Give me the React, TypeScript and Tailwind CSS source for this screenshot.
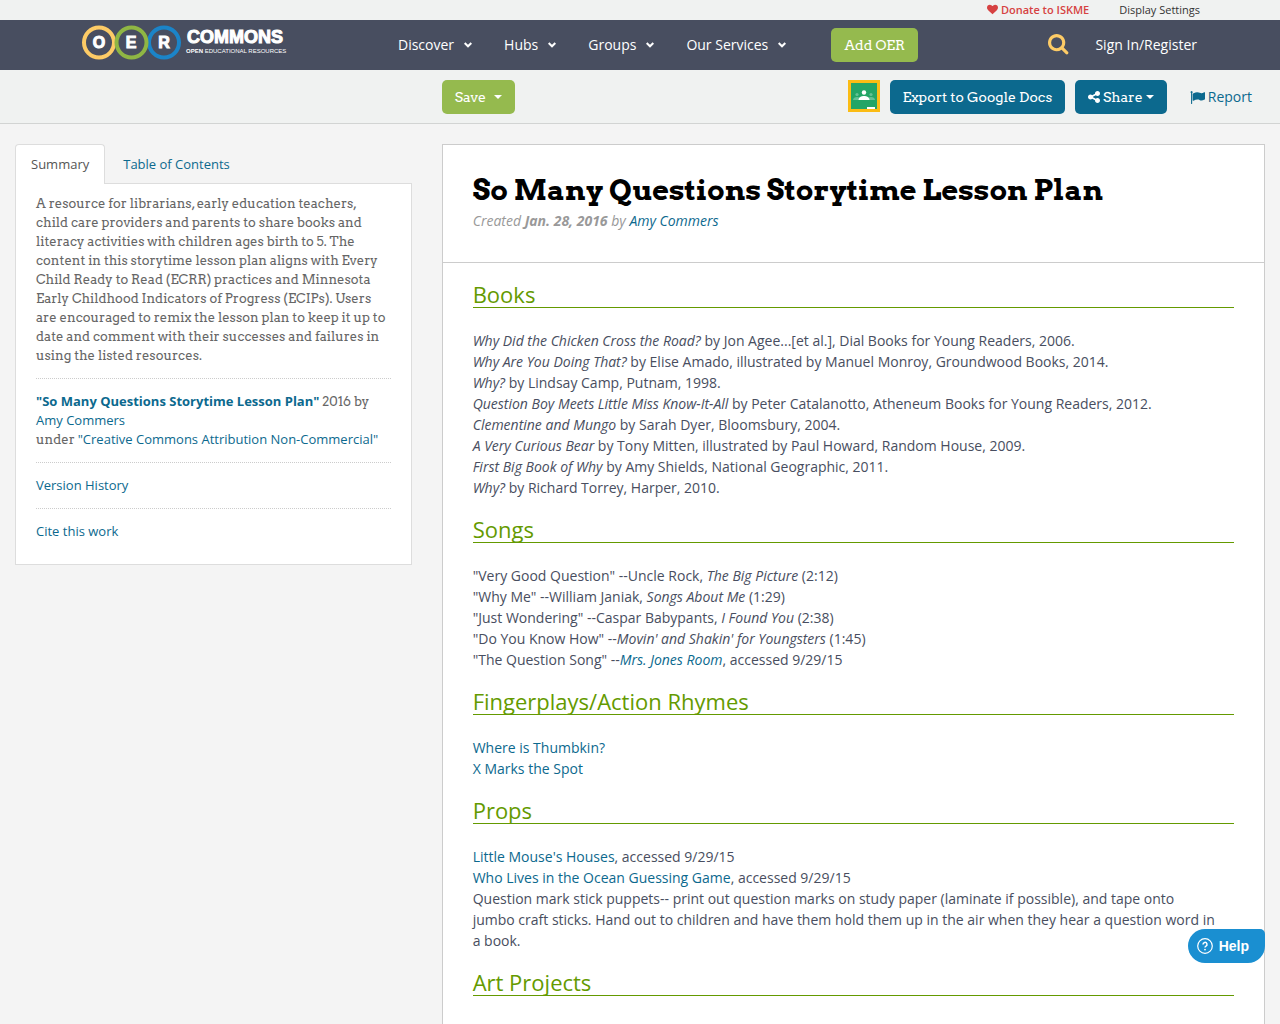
import type { ReactNode } from 'react'

const icons = {
    heart: 'M896 1664q-26 0-44-18l-624-602q-10-8-27.5-26t-55.5-65.5-68-97.5-53.5-121-23.5-138q0-220 127-344t351-124q62 0 126.5 21.5t120 58 95.5 68.5 76 68q36-36 76-68t95.5-68.5 120-58 126.5-21.5q224 0 351 124t127 344q0 221-229 450l-623 600q-18 18-44 18z',
    search: 'M1152 704q0-185-131.5-316.5t-316.5-131.5-316.5 131.5-131.5 316.5 131.5 316.5 316.5 131.5 316.5-131.5 131.5-316.5zm512 832q0 52-38 90t-90 38q-54 0-90-38l-343-342q-179 124-399 124-143 0-273.5-55.5t-225-150-150-225-55.5-273.5 55.5-273.5 150-225 225-150 273.5-55.5 273.5 55.5 225 150 150 225 55.5 273.5q0 220-124 399l343 343q37 37 37 90z',
    share: 'M1344 1024q133 0 226.5 93.5t93.5 226.5-93.5 226.5-226.5 93.5-226.5-93.5-93.5-226.5q0-12 2-34l-360-180q-92 86-218 86-133 0-226.5-93.5t-93.5-226.5 93.5-226.5 226.5-93.5q126 0 218 86l360-180q-2-22-2-34 0-133 93.5-226.5t226.5-93.5 226.5 93.5 93.5 226.5-93.5 226.5-226.5 93.5q-126 0-218-86l-360 180q2 22 2 34t-2 34l360 180q92-86 218-86z',
    flag: 'M320 256q0 72-64 110v1266q0 13-9.5 22.5t-22.5 9.5h-64q-13 0-22.5-9.5t-9.5-22.5v-1266q-64-38-64-110 0-53 37.5-90.5t90.5-37.5 90.5 37.5 37.5 90.5zm1472 64v763q0 25-12.5 38.5t-39.5 27.5q-215 116-369 116-61 0-123.5-22t-108.5-48-115.5-48-142.5-22q-192 0-464 146-17 9-33 9-26 0-45-19t-19-45v-742q0-32 31-55 21-14 79-43 236-120 421-120 107 0 200 29t219 88q38 19 88 19 54 0 117.5-21t110-47 88-47 54.5-21q26 0 45 19t19 45z',
}

type IconProps = {
    name: keyof typeof icons
    className: string
    viewBox?: string
}

function Icon({ name, className, viewBox = '0 0 1792 1792' }: IconProps) {
    return (
        <svg viewBox={viewBox} fill="currentColor" className={className} aria-hidden="true">
            <path d={icons[name]} />
        </svg>
    )
}

function Caret() {
    return (
        <svg viewBox="0 0 8 4" width="8" height="4" fill="currentColor" aria-hidden="true">
            <path d="M0 0h8L4 4z" />
        </svg>
    )
}

function Logo() {
    return (
        <svg width="208" height="36" viewBox="0 0 208 36" role="img" aria-label="OER Commons" className="font-['Liberation_Sans',sans-serif] font-bold">
            <circle cx="17" cy="17.5" r="15" fill="none" stroke="#fdcb66" strokeWidth="4" />
            <circle cx="82" cy="17.5" r="15" fill="none" stroke="#1b84c8" strokeWidth="4" />
            <circle cx="49.5" cy="17.5" r="15" fill="none" stroke="#8fb644" strokeWidth="4" />
            <g fill="#fff" stroke="#fff" strokeWidth="1">
                <text x="17" y="23" fontSize="16" textAnchor="middle">O</text>
                <text x="49" y="23" fontSize="16" textAnchor="middle">E</text>
                <text x="82" y="23" fontSize="16" textAnchor="middle">R</text>
                <text x="105" y="18" fontSize="18">COMMONS</text>
            </g>
            <text x="104" y="28" fontSize="6" fill="#fff">
                OPEN <tspan fontWeight="400">EDUCATIONAL RESOURCES</tspan>
            </text>
        </svg>
    )
}

function NavItem({ label }: { label: string }) {
    return (
        <button className="flex items-center gap-[10px] text-sm text-white">
            {label}
            <svg viewBox="0 0 8 6" width="8" height="6" fill="none" stroke="currentColor" strokeWidth="2" aria-hidden="true">
                <path d="M0.7 1l3.3 3.3L7.3 1" />
            </svg>
        </button>
    )
}

function Link({ children, className = '' }: { children: ReactNode, className?: string }) {
    return <a href="#" className={`text-[#0c698e] ${className}`}>{children}</a>
}

function Section({ title, children }: { title: string, children?: ReactNode }) {
    return (
        <section className="pt-[19px]">
            <h2 className="mb-[22px] border-b border-[#649a00] text-[22px] leading-[25px] text-[#649a00]">{title}</h2>
            {children}
        </section>
    )
}

function ClassroomIcon() {
    return (
        <svg width="32" height="32" viewBox="0 0 32 32" aria-hidden="true">
            <path fill="#fbbc14" d="M0 0h32v32H0z" />
            <path fill="#23a566" d="M3 3h26v26H3z" />
            <g fill="#64c194">
                <circle cx="9" cy="14.5" r="1.6" />
                <circle cx="23" cy="14.5" r="1.6" />
                <path d="M5 20c0-4 8-4 8 0zM19 20c0-4 8-4 8 0z" />
            </g>
            <circle cx="16" cy="12.5" r="2.2" fill="#fff" />
            <path fill="#fff" d="M10.5 20c0-5.5 11-5.5 11 0z" />
            <path fill="#fff" d="M19 27h8v2h-8z" />
        </svg>
    )
}

export default function App() {
    return (
        <div className="min-h-screen bg-[#f4f4f4] font-['Open_Sans',sans-serif] text-sm text-[#484e60]">
            <div className="bg-[#f0f2f1]">
                <div className="mx-auto flex h-5 max-w-[1170px] items-center justify-end gap-[30px] pr-[25px] text-[11px]">
                    <a href="#" className="flex items-center gap-[3px] font-semibold text-[#d64242]">
                        <Icon name="heart" className="size-[11px]" />
                        Donate to ISKME
                    </a>
                    <button className="text-[#333]">Display Settings</button>
                </div>
            </div>

            <header className="bg-[#484e60]">
                <div className="mx-auto flex h-[50px] max-w-[1170px] items-center pr-7 pl-[27px]">
                    <a href="#" className="mb-[5px]"><Logo /></a>
                    <nav className="ml-[108px] flex items-center gap-8">
                        <NavItem label="Discover" />
                        <NavItem label="Hubs" />
                        <NavItem label="Groups" />
                        <NavItem label="Our Services" />
                    </nav>
                    <button className="ml-[45px] h-[34px] w-[87px] rounded-[5px] bg-[#95ba4e] font-['Arvo',serif] text-sm text-white">Add OER</button>
                    <button aria-label="Search" className="ml-auto text-[#fdcb66]">
                        <Icon name="search" className="size-[22px]" />
                    </button>
                    <a href="#" className="ml-[25px] text-white">Sign In/Register</a>
                </div>
            </header>

            <div className="grid grid-cols-3 border-b border-[#d2d4d3] bg-[#f0f2f1] pt-[10px] pb-[9px] font-['Arvo',serif] text-sm">
                <div className="col-span-2 col-start-2 flex items-center px-[15px]">
                    <button className="flex h-[34px] items-center gap-2 rounded-[5px] bg-[#95ba4e] px-[13px] text-white">
                        Save <Caret />
                    </button>
                    <a href="#" aria-label="Share to Google Classroom" className="mr-[10px] ml-auto flex h-[34px] items-start"><ClassroomIcon /></a>
                    <button className="h-[34px] w-[175px] rounded-[5px] bg-[#0c698e] text-white">Export to Google Docs</button>
                    <button className="ml-[10px] flex h-[34px] w-[92px] items-center justify-center gap-[3px] rounded-[5px] bg-[#0c698e] text-white">
                        <Icon name="share" viewBox="128 128 1536 1536" className="size-3" />
                        Share
                        <Caret />
                    </button>
                    <a href="#" className="mr-[13px] ml-[23px] flex items-center gap-[3px] font-['Open_Sans',sans-serif] text-sm text-[#0c698e]">
                        <Icon name="flag" className="size-[15px]" />
                        Report
                    </a>
                </div>
            </div>

            <main className="grid grid-cols-3 items-start pt-5">
                <aside className="px-[15px] text-[13px] leading-[19px]">
                    <div role="tablist" className="-mb-px flex">
                        <button role="tab" aria-selected="true" className="relative h-10 rounded-t border border-b-0 border-[#ddd] bg-white px-[15px] text-[#555]">Summary</button>
                        <button role="tab" aria-selected="false" className="ml-[3px] h-10 px-[15px] text-[#0c698e]">Table of Contents</button>
                    </div>
                    <div className="border border-[#ddd] bg-white px-5 pt-[10px] pb-[23px] font-['Arvo',serif] text-[#666]">
                        <p className="pr-1">
                            A resource for librarians, early education teachers, child care providers and parents to share books and literacy activities with children ages birth to 5. The content in this storytime lesson plan aligns with Every Child Ready to Read (ECRR) practices and Minnesota Early Childhood Indicators of Progress (ECIPs). Users are encouraged to remix the lesson plan to keep it up to date and comment with their successes and failures in using the listed resources.
                        </p>
                        <div className="mt-[13px] border-t border-dotted border-[#ccc] py-[13px]">
                            <Link className="font-['Open_Sans',sans-serif] font-bold">"So Many Questions Storytime Lesson Plan"</Link> 2016 by <Link className="font-['Open_Sans',sans-serif]">Amy Commers</Link>
                            <br />
                            under <Link className="font-['Open_Sans',sans-serif]">"Creative Commons Attribution Non-Commercial"</Link>
                        </div>
                        <div className="border-t border-dotted border-[#ccc] py-[13px] font-['Open_Sans',sans-serif]">
                            <Link>Version History</Link>
                        </div>
                        <div className="border-t border-dotted border-[#ccc] pt-[13px] font-['Open_Sans',sans-serif]">
                            <Link>Cite this work</Link>
                        </div>
                    </div>
                </aside>

                <div className="col-span-2 px-[15px]">
                    <article className="border border-[#ccc] bg-white pb-24 leading-[21px]">
                        <header className="border-b border-[#ccc] px-[30px] pt-[25px] pb-[30px]">
                            <h1 className="font-['Arvo',serif] text-[29px] leading-10 font-bold text-black">So Many Questions Storytime Lesson Plan</h1>
                            <p className="leading-[22px] text-[#999] italic">
                                Created <strong>Jan. 28, 2016</strong> by <Link>Amy Commers</Link>
                            </p>
                        </header>
                        <div className="px-[30px]">
                            <Section title="Books">
                                <p>
                                    <i>Why Did the Chicken Cross the Road?</i> by Jon Agee...[et al.], Dial Books for Young Readers, 2006.<br />
                                    <i>Why Are You Doing That?</i> by Elise Amado, illustrated by Manuel Monroy, Groundwood Books, 2014.<br />
                                    <i>Why?</i> by Lindsay Camp, Putnam, 1998.<br />
                                    <i>Question Boy Meets Little Miss Know-It-All</i> by Peter Catalanotto, Atheneum Books for Young Readers, 2012.<br />
                                    <i>Clementine and Mungo</i> by Sarah Dyer, Bloomsbury, 2004.<br />
                                    <i>A Very Curious Bear</i> by Tony Mitten, illustrated by Paul Howard, Random House, 2009.<br />
                                    <i>First Big Book of Why</i> by Amy Shields, National Geographic, 2011.<br />
                                    <i>Why?</i> by Richard Torrey, Harper, 2010.
                                </p>
                            </Section>
                            <Section title="Songs">
                                <p>
                                    "Very Good Question" --Uncle Rock, <i>The Big Picture</i> (2:12)<br />
                                    "Why Me" --William Janiak, <i>Songs About Me</i> (1:29)<br />
                                    "Just Wondering" --Caspar Babypants, <i>I Found You</i> (2:38)<br />
                                    "Do You Know How" --<i>Movin' and Shakin' for Youngsters</i> (1:45)<br />
                                    "The Question Song" --<i><Link>Mrs. Jones Room</Link></i>, accessed 9/29/15
                                </p>
                            </Section>
                            <Section title="Fingerplays/Action Rhymes">
                                <p>
                                    <Link>Where is Thumbkin?</Link><br />
                                    <Link>X Marks the Spot</Link>
                                </p>
                            </Section>
                            <Section title="Props">
                                <p>
                                    <Link>Little Mouse's Houses</Link>, accessed 9/29/15<br />
                                    <Link>Who Lives in the Ocean Guessing Game</Link>, accessed 9/29/15<br />
                                    Question mark stick puppets-- print out question marks on study paper (laminate if possible), and tape onto<br />
                                    jumbo craft sticks. Hand out to children and have them hold them up in the air when they hear a question word in<br />
                                    a book.
                                </p>
                            </Section>
                            <Section title="Art Projects" />
                        </div>
                    </article>
                </div>
            </main>

            <button className="fixed right-[15px] bottom-[61px] flex h-[34px] items-center gap-[6px] rounded-l-[17px] rounded-tr-[5px] rounded-br-[17px] bg-[#1a8fd1] pr-4 pl-[9px] font-['Liberation_Sans',sans-serif] text-sm font-bold text-white">
                <svg viewBox="0 0 16 16" width="16" height="16" fill="none" stroke="currentColor" aria-hidden="true">
                    <circle cx="8" cy="8" r="7.3" strokeWidth="1.2" />
                    <path d="M6 6.4a2 2 0 1 1 3 1.7c-.7.4-1 .7-1 1.4" strokeWidth="1.5" />
                    <circle cx="8" cy="11.6" r=".9" fill="currentColor" stroke="none" />
                </svg>
                Help
            </button>
        </div>
    )
}
